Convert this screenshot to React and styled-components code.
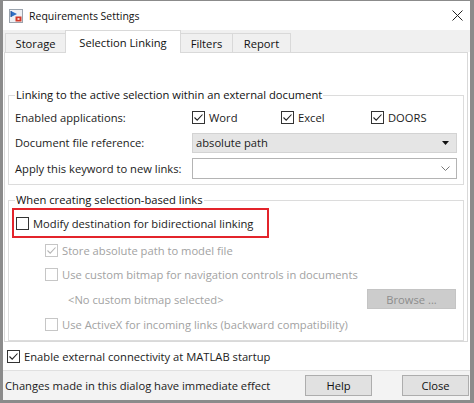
import React from "react";
import styled, { createGlobalStyle } from "styled-components";

const GlobalStyle = createGlobalStyle`
  html, body {
    margin: 0;
    padding: 0;
    background: #ffffff;
  }
  body {
    font-family: "Open Sans", "Noto Sans", Arial, sans-serif;
    font-size: 11.2px;
    color: #1b1b1b;
  }
`;

const Window = styled.div`
  width: 474px;
  height: 403px;
  box-sizing: border-box;
  border: 3px solid #8b8b8b;
  border-top-width: 1px;
  border-right-width: 4px;
  display: flex;
  flex-direction: column;
  background: #ffffff;
  overflow: hidden;
`;

const TitleBar = styled.div`
  height: 29px;
  flex: none;
  display: flex;
  align-items: center;
  padding: 0 7px 0 6px;
  gap: 6px;
`;

const TitleText = styled.span`
  flex: 1;
  font-size: 10.5px;
  color: #111;
`;

const CloseBtn = styled.div`
  width: 12px;
  height: 12px;
  display: flex;
  align-items: center;
  justify-content: center;
`;

const TabStrip = styled.div`
  height: 22px;
  flex: none;
  display: flex;
  align-items: flex-end;
  padding-left: 2px;
  background: #f0f0f0;
`;

const Tab = styled.div`
  position: relative;
  box-sizing: border-box;
  width: ${(p) => p.w}px;
  height: ${(p) => (p.active ? 23 : 19)}px;
  margin-left: -1px;
  margin-bottom: ${(p) => (p.active ? -1 : 0)}px;
  z-index: ${(p) => (p.active ? 2 : 1)};
  border: 1px solid #d9d9d9;
  border-bottom: none;
  background: ${(p) => (p.active ? "#ffffff" : "#f0f0f0")};
  display: flex;
  align-items: center;
  justify-content: center;
  padding-top: ${(p) => (p.active ? 0 : 1)}px;
  color: #111;
  &:first-child {
    margin-left: 0;
  }
`;

const Panel = styled.div`
  flex: none;
  margin: 0 2px 0 1px;
  border: 1px solid #d9d9d9;
  background: #ffffff;
  padding: 34px 3px 0 3px;
  display: flex;
  flex-direction: column;
`;

const Group = styled.fieldset`
  margin: ${(p) => p.top || 0}px 0 0 0;
  padding: 0 6px 3px ${(p) => p.left}px;
  border: 1px solid #dcdcdc;
  min-width: 0;
`;

const Legend = styled.legend`
  padding: 0 1px;
  margin-left: ${(p) => p.shift || 0}px;
  line-height: 16px;
  height: 16px;
  color: #111;
`;

const FormGrid = styled.div`
  margin-top: 2px;
  display: grid;
  grid-template-columns: 177px 1fr;
  grid-template-rows: 25px 25px 26px;
  align-items: center;
`;

const Label = styled.span`
  white-space: nowrap;
`;

const AppChecks = styled.div`
  display: flex;
  align-items: center;
`;

const CheckItem = styled.label`
  display: flex;
  align-items: center;
  gap: 4px;
  width: ${(p) => (p.w ? `${p.w}px` : "auto")};
  white-space: nowrap;
  color: ${(p) => (p.disabled ? "#a2a2a2" : "#1b1b1b")};
`;

const Box = styled.span`
  box-sizing: border-box;
  width: 13px;
  height: 13px;
  flex: none;
  border: 1px solid ${(p) => (p.disabled ? "#c6c6c6" : "#333333")};
  background: #ffffff;
  display: flex;
  align-items: center;
  justify-content: center;
`;

const Select = styled.div`
  box-sizing: border-box;
  height: 20px;
  background: #e5e5e5;
  border: 1px solid #d3d3d3;
  display: flex;
  align-items: center;
  justify-content: space-between;
  padding: 0 7px 0 3px;
`;

const Combo = styled.div`
  box-sizing: border-box;
  height: 21px;
  background: #ffffff;
  border: 1px solid #b4b4b4;
  display: flex;
  align-items: center;
  justify-content: flex-end;
  padding: 0 6px 0 3px;
`;

const Highlight = styled.div`
  box-sizing: border-box;
  width: 257px;
  height: 30px;
  border: 2px solid #e3242b;
  display: flex;
  align-items: center;
  padding-left: 2px;
`;

const SubRow = styled.div`
  height: ${(p) => p.h}px;
  display: flex;
  align-items: center;
  justify-content: space-between;
  padding-left: ${(p) => p.indent}px;
`;

const Placeholder = styled.span`
  color: #a2a2a2;
`;

const BrowseButton = styled.div`
  box-sizing: border-box;
  width: 89px;
  height: 20px;
  background: #cccccc;
  border: 1px solid #c4c4c4;
  color: #8c8c8c;
  display: flex;
  align-items: center;
  justify-content: center;
  margin-right: 1px;
`;

const StartupRow = styled.div`
  height: 28px;
  flex: none;
  display: flex;
  align-items: center;
  padding-left: 4px;
`;

const Footer = styled.div`
  flex: 1;
  display: flex;
  align-items: center;
  border-top: 1px solid #e0e0e0;
  background: #f3f3f3;
  padding: 0 1px 0 2px;
`;

const Status = styled.span`
  flex: 1;
  white-space: nowrap;
`;

const Button = styled.div`
  box-sizing: border-box;
  width: ${(p) => p.w}px;
  height: 21px;
  margin-left: ${(p) => p.gap}px;
  background: #e1e1e1;
  border: 1px solid #adadad;
  display: flex;
  align-items: center;
  justify-content: center;
  color: #111;
`;

const AppIcon = () => (
  <svg width="14" height="14" viewBox="0 0 14 14">
    <rect x="0.5" y="0.5" width="13" height="13" fill="#eef0f3" stroke="#9aa3ad" />
    <path d="M2 2 L8 5 L2 8 Z" fill="#2f6fc4" />
    <path d="M2 2 L2 8" stroke="#1d4f96" strokeWidth="1" />
    <rect x="6.5" y="7.5" width="6" height="5" fill="#d23a2a" />
    <rect x="8.5" y="9" width="2" height="2" fill="#f6d2c8" />
  </svg>
);

const CloseIcon = () => (
  <svg width="11" height="11" viewBox="0 0 11 11">
    <path d="M0.5 0.5 L10.5 10.5 M10.5 0.5 L0.5 10.5" stroke="#222" strokeWidth="1" />
  </svg>
);

const Check = ({ checked, disabled }) => (
  <Box disabled={disabled}>
    {checked && (
      <svg width="11" height="11" viewBox="0 0 11 11">
        <path
          d="M1.5 5.5 L4.2 8.2 L9.5 2.5"
          fill="none"
          stroke={disabled ? "#b5b5b5" : "#222"}
          strokeWidth="1.1"
        />
      </svg>
    )}
  </Box>
);

const CheckField = ({ checked, disabled, w, children }) => (
  <CheckItem disabled={disabled} w={w}>
    <Check checked={checked} disabled={disabled} />
    {children}
  </CheckItem>
);

const DropArrow = () => (
  <svg width="7" height="4" viewBox="0 0 7 4">
    <path d="M0 0 L7 0 L3.5 4 Z" fill="#111" />
  </svg>
);

const Chevron = () => (
  <svg width="9" height="5" viewBox="0 0 9 5">
    <path d="M0.5 0.5 L4.5 4.5 L8.5 0.5" fill="none" stroke="#777" strokeWidth="1" />
  </svg>
);

const tabs = [
  { name: "Storage", w: 61 },
  { name: "Selection Linking", w: 116, active: true },
  { name: "Filters", w: 53 },
  { name: "Report", w: 59 },
];

export default function App() {
  return (
    <>
      <GlobalStyle />
      <Window>
        <TitleBar>
          <AppIcon />
          <TitleText>Requirements Settings</TitleText>
          <CloseBtn>
            <CloseIcon />
          </CloseBtn>
        </TitleBar>

        <TabStrip>
          {tabs.map((t) => (
            <Tab key={t.name} w={t.w} active={t.active}>
              {t.name}
            </Tab>
          ))}
        </TabStrip>

        <Panel>
          <Group left={6}>
            <Legend>Linking to the active selection within an external document</Legend>
            <FormGrid>
              <Label>Enabled applications:</Label>
              <AppChecks>
                <CheckField checked w={89}>Word</CheckField>
                <CheckField checked w={90}>Excel</CheckField>
                <CheckField checked>DOORS</CheckField>
              </AppChecks>
              <Label>Document file reference:</Label>
              <Select>
                <span>absolute path</span>
                <DropArrow />
              </Select>
              <Label>Apply this keyword to new links:</Label>
              <Combo>
                <Chevron />
              </Combo>
            </FormGrid>
          </Group>

          <Group top={7} left={3}>
            <Legend shift={3}>When creating selection-based links</Legend>
            <Highlight>
              <CheckField>Modify destination for bidirectional linking</CheckField>
            </Highlight>
            <SubRow h={24} indent={33}>
              <CheckField checked disabled>Store absolute path to model file</CheckField>
            </SubRow>
            <SubRow h={24} indent={33}>
              <CheckField disabled>Use custom bitmap for navigation controls in documents</CheckField>
            </SubRow>
            <SubRow h={26} indent={56}>
              <Placeholder>&lt;No custom bitmap selected&gt;</Placeholder>
              <BrowseButton>Browse ...</BrowseButton>
            </SubRow>
            <SubRow h={25} indent={33}>
              <CheckField disabled>Use ActiveX for incoming links (backward compatibility)</CheckField>
            </SubRow>
          </Group>
        </Panel>

        <StartupRow>
          <CheckField checked>Enable external connectivity at MATLAB startup</CheckField>
        </StartupRow>

        <Footer>
          <Status>Changes made in this dialog have immediate effect</Status>
          <Button w={67}>Help</Button>
          <Button w={67} gap={30}>Close</Button>
        </Footer>
      </Window>
    </>
  );
}
